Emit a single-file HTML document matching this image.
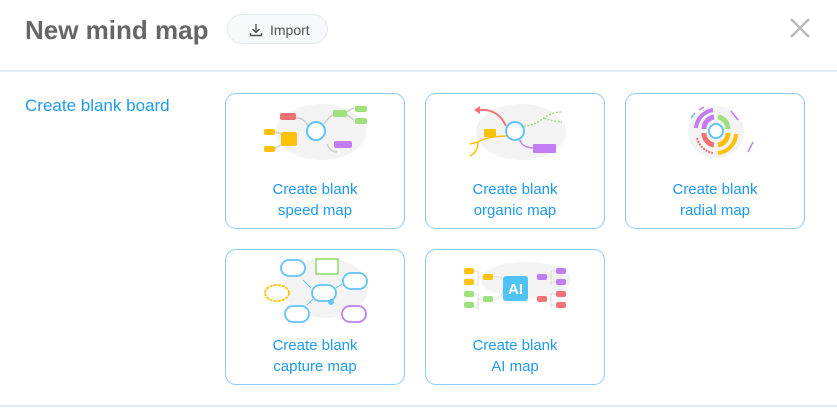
<!DOCTYPE html>
<html><head><meta charset="utf-8"><style>
body{margin:0;width:837px;height:412px;background:#fff;font-family:"Liberation Sans",sans-serif;position:relative;overflow:hidden}
.t{position:absolute;left:25px;top:15px;font-size:26px;font-weight:bold;color:#666}
.imp{position:absolute;left:227px;top:14px;width:101px;height:30px;border:1px solid #e3e8ee;border-radius:15px;background:#f7f9fb;box-sizing:border-box;font-size:14px;color:#555;line-height:30px}
.imp span{position:absolute;left:42px}
.imp svg{position:absolute;left:21px;top:8px}
.x{position:absolute;left:789px;top:17px}
.hl{position:absolute;left:0;width:837px;height:2px;background:#e2ebf3}
.cb{position:absolute;left:25px;top:96px;font-size:17px;color:#1e9af0}
.card{position:absolute;width:180px;height:136px;border:1px solid #8ccbf6;border-radius:11px;box-sizing:border-box;background:#fff}
.card .l{position:absolute;left:0;right:0;top:85px;text-align:center;font-size:15px;line-height:21px;color:#1e9af0}
.card svg{position:absolute;left:0;top:0}
</style></head><body>
<div class="t">New mind map</div>
<div class="imp"><svg width="14" height="14" viewBox="0 0 14 14" fill="none" stroke="#555" stroke-width="1.4"><path d="M7 1v8M3.5 6L7 9.5 10.5 6M1.5 10v2.5h11V10"/></svg><span>Import</span></div>
<svg class="x" width="22" height="22" viewBox="0 0 22 22" stroke="#bbb" stroke-width="2.5"><path d="M2 2l18 18M20 2L2 20"/></svg>
<div class="hl" style="top:70px"></div>
<div class="hl" style="top:405px"></div>
<div class="cb">Create blank board</div>

<div class="card" style="left:225px;top:93px">
<svg width="180" height="80"><ellipse cx="95" cy="38" rx="45" ry="28" fill="#f3f3f3"/>
<path d="M70 24q10 0 12 10M98 30q5-8 10-9M118 19l10-5M118 19l10 7M60 48l10-5M48 38l12 3M48 55l12-7M101 50q3 8 10 8" stroke="#ccc" fill="none" stroke-width="1.5"/>
<rect x="54" y="19" width="16" height="7" rx="2" fill="#f47176"/><rect x="107" y="16" width="14" height="7" rx="2" fill="#9ee07b"/><rect x="129" y="12" width="12" height="6" rx="2" fill="#9ee07b"/><rect x="129" y="24" width="12" height="6" rx="2" fill="#9ee07b"/>
<rect x="55" y="38" width="16" height="14" rx="2" fill="#ffc107"/><rect x="38" y="35" width="11" height="6" rx="2" fill="#ffc107"/><rect x="38" y="52" width="11" height="6" rx="2" fill="#ffc107"/>
<rect x="108" y="47" width="18" height="7" rx="2" fill="#c27cf4"/>
<circle cx="90" cy="37" r="9" fill="#fff" stroke="#62c4f7" stroke-width="2"/></svg>
<div class="l">Create blank<br>speed map</div></div>

<div class="card" style="left:425px;top:93px">
<svg width="180" height="80"><ellipse cx="95" cy="38" rx="45" ry="28" fill="#f3f3f3"/>
<path d="M52 16q20-2 28 16" stroke="#f47176" fill="none" stroke-width="1.8"/><path d="M48 16l6-4v8z" fill="#f47176"/>
<path d="M98 32q10 0 20-8 8-6 18-6M118 24q10 4 18 4" stroke="#9ee07b" fill="none" stroke-width="1.5" stroke-dasharray="2 1.5"/>
<path d="M82 42q-20 0-30 6M52 48q0 10-8 14M52 48l-8 2" stroke="#ffc107" fill="none" stroke-width="1.5"/>
<rect x="58" y="35" width="12" height="8" rx="1" fill="#ffc107"/>
<path d="M94 46q2 8 15 8" stroke="#c27cf4" fill="none" stroke-width="1.5"/><rect x="107" y="50" width="23" height="9" rx="1" fill="#c27cf4"/>
<circle cx="89" cy="37" r="9" fill="#fff" stroke="#62c4f7" stroke-width="2"/></svg>
<div class="l">Create blank<br>organic map</div></div>

<div class="card" style="left:625px;top:93px">
<svg width="180" height="80"><ellipse cx="90" cy="38" rx="28" ry="26" fill="#f3f3f3"/>
<g fill="none" stroke-width="5"><path d="M78 35a12 12 0 0 1 10-12" stroke="#c27cf4"/><path d="M92 23a12 12 0 0 1 10 12" stroke="#9ee07b"/><path d="M102 39a12 12 0 0 1-10 12" stroke="#ffc107"/><path d="M88 51a12 12 0 0 1-10-12" stroke="#f47176"/>
<path d="M70 34a20 20 0 0 1 17-18" stroke="#c27cf4" stroke-width="4"/><path d="M110 40a20 20 0 0 1-18 19" stroke="#ffc107" stroke-width="4"/><path d="M87 59a20 20 0 0 1-16-15" stroke="#f47176" stroke-width="2" stroke-dasharray="2 1"/></g>
<path d="M73 16l5-3M105 17l7 9M127 48l-5 10" stroke="#c27cf4" stroke-width="1.5"/><path d="M65 24l4-5" stroke="#62c4f7" stroke-width="1.5"/>
<circle cx="90" cy="37" r="7" fill="#fff" stroke="#62c4f7" stroke-width="2"/></svg>
<div class="l">Create blank<br>radial map</div></div>

<div class="card" style="left:225px;top:249px">
<svg width="180" height="80"><ellipse cx="100" cy="38" rx="42" ry="30" fill="#f3f3f3"/>
<g fill="#fff" stroke="#62c4f7" stroke-width="1.8"><rect x="55" y="10" width="24" height="16" rx="8"/><rect x="117" y="23" width="24" height="16" rx="8"/><rect x="86" y="35" width="24" height="16" rx="8"/><rect x="59" y="56" width="24" height="16" rx="8"/></g>
<rect x="90" y="9" width="22" height="15" fill="#fff" stroke="#9ee07b" stroke-width="1.8"/>
<rect x="116" y="56" width="24" height="16" rx="8" fill="#fff" stroke="#c27cf4" stroke-width="1.8"/>
<ellipse cx="51" cy="43" rx="12" ry="8" fill="#fff" stroke="#ffc107" stroke-width="1.8" stroke-dasharray="3 1"/>
<circle cx="105" cy="52" r="3" fill="#62c4f7"/><path d="M85 38l-8-8M110 38l6-4M87 49l-6 6" stroke="#62c4f7" stroke-width="1"/></svg>
<div class="l">Create blank<br>capture map</div></div>

<div class="card" style="left:425px;top:249px">
<svg width="180" height="80"><ellipse cx="100" cy="30" rx="45" ry="18" fill="#f3f3f3"/>
<g fill="#ffc107"><rect x="38" y="18" width="10" height="6" rx="2"/><rect x="38" y="29" width="10" height="6" rx="2"/><rect x="57" y="24" width="10" height="6" rx="2"/></g>
<g fill="#9ee07b"><rect x="38" y="41" width="10" height="6" rx="2"/><rect x="38" y="52" width="10" height="6" rx="2"/><rect x="57" y="46" width="10" height="6" rx="2"/></g>
<g fill="#c27cf4"><rect x="111" y="24" width="10" height="6" rx="2"/><rect x="130" y="18" width="10" height="6" rx="2"/><rect x="130" y="29" width="10" height="6" rx="2"/></g>
<g fill="#f47176"><rect x="111" y="46" width="10" height="6" rx="2"/><rect x="130" y="41" width="10" height="6" rx="2"/><rect x="130" y="52" width="10" height="6" rx="2"/></g>
<path d="M48 21h4v14h-4M52 27h5M48 44h4v14h-4M52 49h5M67 27h10M67 49q10 0 10-10M121 27h4M125 21v14M125 21h5M125 32h5M121 49h4M125 44v14M125 44h5M125 55h5" stroke="#ddd" fill="none"/>
<rect x="77" y="26" width="25" height="25" rx="3" fill="#4fc3f7"/><text x="89.5" y="44" text-anchor="middle" font-size="15" font-weight="bold" fill="#fff" font-family="Liberation Sans">AI</text></svg>
<div class="l">Create blank<br>AI map</div></div>
</body></html>
